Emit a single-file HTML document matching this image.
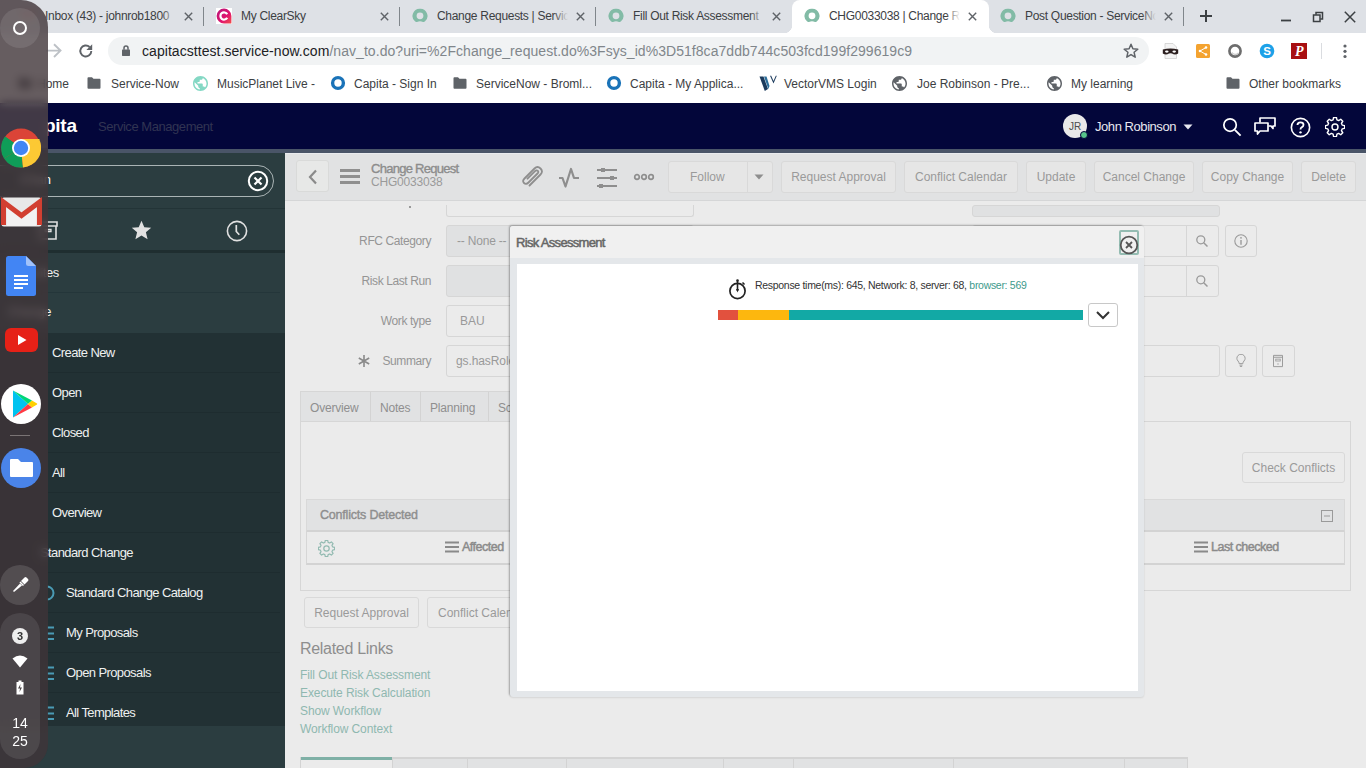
<!DOCTYPE html>
<html><head><meta charset="utf-8">
<style>
*{box-sizing:border-box;margin:0;padding:0}
html,body{width:1366px;height:768px;overflow:hidden;background:#fff;font-family:"Liberation Sans",sans-serif}
.a{position:absolute}
.nw{white-space:nowrap}
/* chrome */
#tabs{left:0;top:0;width:1366px;height:33px;background:#dee1e6}
.tab{position:absolute;top:0;height:32px;width:196px;font-size:12px;color:#3c4043}
.tab .fav{position:absolute;left:11px;top:8px;width:16px;height:16px}
.tab .tt{position:absolute;left:36px;top:9px;width:131px;overflow:hidden;white-space:nowrap;letter-spacing:-0.3px}
.tab .tt:after{content:"";position:absolute;right:0;top:0;width:14px;height:16px;background:linear-gradient(90deg,rgba(222,225,230,0),#dee1e6)}
.tab.act .tt:after{background:linear-gradient(90deg,rgba(255,255,255,0),#fff)}
.tab .cx{position:absolute;left:175px;top:12px;width:9px;height:9px}
.sep{position:absolute;top:7px;width:1px;height:19px;background:#80868b}
#toolbar{left:0;top:33px;width:1366px;height:70px;background:#fff}
#omni{left:108px;top:37px;width:1041px;height:28px;border-radius:14px;background:#f1f3f4}
.bm{position:absolute;top:77px;font-size:12px;color:#3c4043;white-space:nowrap;letter-spacing:0px}
/* sn header */
#snh{left:0;top:103px;width:1366px;height:46px;background:#03063a}
#slate{left:0;top:149px;width:1366px;height:4px;background:#4a5568}
#nav{left:0;top:153px;width:285px;height:615px;background:#2b3d40}
#content{left:285px;top:153px;width:1081px;height:615px;background:#ebebeb;overflow:hidden}
.lbl{position:absolute;font-size:12px;color:#959595;white-space:nowrap;text-align:right;letter-spacing:-0.4px}
.fld{position:absolute;height:32px;border:1px solid #d6d6d6;border-radius:3px;background:#ebebeb}
.ro{background:#e0e1e2}
.btn{position:absolute;height:31px;border:1px solid #d9d9d9;border-radius:3px;background:#e6e6e6;font-size:12px;color:#9a9a9a;text-align:center;line-height:29px;white-space:nowrap}
</style></head><body>

<!-- Chrome tabs -->
<div id="tabs" class="a"></div>
<div class="a" style="left:792px;top:0;width:197px;height:33px;background:#fff;border-radius:8px 8px 0 0"></div>
<div class="a" style="left:784px;top:25px;width:8px;height:8px;background:radial-gradient(circle at 0 0,#dee1e6 8px,#fff 8.5px)"></div>
<div class="a" style="left:989px;top:25px;width:8px;height:8px;background:radial-gradient(circle at 100% 0,#dee1e6 8px,#fff 8.5px)"></div>
<div class="tab" style="left:9px"><svg class="fav" viewBox="0 0 16 16"><rect x="1" y="3" width="14" height="10" fill="#fff"/><path d="M1 3L8 9L15 3" stroke="#d44638" stroke-width="2" fill="none"/></svg><div class="tt">Inbox (43) - johnrob1800</div><svg class="cx" viewBox="0 0 9 9"><path d="M0.8 0.8L8.2 8.2M8.2 0.8L0.8 8.2" stroke="#5f6368" stroke-width="1.4"/></svg></div>
<div class="tab" style="left:205px"><svg class="fav" viewBox="0 0 16 16"><defs><linearGradient id="csg" x1="0" y1="0" x2="1" y2="1"><stop offset="0" stop-color="#b5157a"/><stop offset="0.6" stop-color="#e0146e"/><stop offset="1" stop-color="#f2504a"/></linearGradient></defs><rect width="16" height="16" fill="#fff"/><path d="M15.4 8A7.4 7.4 0 1 0 8 15.4H15.4Z" fill="url(#csg)"/><path d="M11.2 6.3A3.6 3.6 0 1 0 11.2 9.7" fill="none" stroke="#fff" stroke-width="2.2"/></svg><div class="tt">My ClearSky</div><svg class="cx" viewBox="0 0 9 9"><path d="M0.8 0.8L8.2 8.2M8.2 0.8L0.8 8.2" stroke="#5f6368" stroke-width="1.4"/></svg></div>
<div class="tab" style="left:401px"><svg class="fav" viewBox="0 0 16 16"><path d="M8 0.8A7.2 7.2 0 0 0 3.2 13.6Q4 14.3 5 13.9Q8 12.8 11 13.9Q12 14.3 12.8 13.6A7.2 7.2 0 0 0 8 0.8ZM8 4.4A3.4 3.4 0 1 1 8 11.2A3.4 3.4 0 1 1 8 4.4Z" fill="#82bba6" fill-rule="evenodd"/></svg><div class="tt">Change Requests | ServiceNow</div><svg class="cx" viewBox="0 0 9 9"><path d="M0.8 0.8L8.2 8.2M8.2 0.8L0.8 8.2" stroke="#5f6368" stroke-width="1.4"/></svg></div>
<div class="tab" style="left:597px"><svg class="fav" viewBox="0 0 16 16"><path d="M8 0.8A7.2 7.2 0 0 0 3.2 13.6Q4 14.3 5 13.9Q8 12.8 11 13.9Q12 14.3 12.8 13.6A7.2 7.2 0 0 0 8 0.8ZM8 4.4A3.4 3.4 0 1 1 8 11.2A3.4 3.4 0 1 1 8 4.4Z" fill="#82bba6" fill-rule="evenodd"/></svg><div class="tt">Fill Out Risk Assessment</div><svg class="cx" viewBox="0 0 9 9"><path d="M0.8 0.8L8.2 8.2M8.2 0.8L0.8 8.2" stroke="#5f6368" stroke-width="1.4"/></svg></div>
<div class="tab act" style="left:793px"><svg class="fav" viewBox="0 0 16 16"><path d="M8 0.8A7.2 7.2 0 0 0 3.2 13.6Q4 14.3 5 13.9Q8 12.8 11 13.9Q12 14.3 12.8 13.6A7.2 7.2 0 0 0 8 0.8ZM8 4.4A3.4 3.4 0 1 1 8 11.2A3.4 3.4 0 1 1 8 4.4Z" fill="#82bba6" fill-rule="evenodd"/></svg><div class="tt">CHG0033038 | Change Request</div><svg class="cx" viewBox="0 0 9 9"><path d="M0.8 0.8L8.2 8.2M8.2 0.8L0.8 8.2" stroke="#5f6368" stroke-width="1.4"/></svg></div>
<div class="tab" style="left:989px"><svg class="fav" viewBox="0 0 16 16"><path d="M8 0.8A7.2 7.2 0 0 0 3.2 13.6Q4 14.3 5 13.9Q8 12.8 11 13.9Q12 14.3 12.8 13.6A7.2 7.2 0 0 0 8 0.8ZM8 4.4A3.4 3.4 0 1 1 8 11.2A3.4 3.4 0 1 1 8 4.4Z" fill="#82bba6" fill-rule="evenodd"/></svg><div class="tt">Post Question - ServiceNow</div><svg class="cx" viewBox="0 0 9 9"><path d="M0.8 0.8L8.2 8.2M8.2 0.8L0.8 8.2" stroke="#5f6368" stroke-width="1.4"/></svg></div>
<div class="sep" style="left:203px"></div>
<div class="sep" style="left:399px"></div>
<div class="sep" style="left:595px"></div>
<div class="sep" style="left:1183px"></div>
<svg class="a" style="left:1199px;top:9px" width="14" height="14" viewBox="0 0 14 14"><path d="M7 1V13M1 7H13" stroke="#3c4043" stroke-width="2"/></svg>
<svg class="a" style="left:1279px;top:12px" width="14" height="14" viewBox="0 0 14 14"><path d="M2 8.5H12" stroke="#3c4043" stroke-width="1.8"/></svg>
<svg class="a" style="left:1312px;top:11px" width="12" height="12" viewBox="0 0 12 12"><rect x="1.5" y="4" width="6.5" height="6.5" fill="none" stroke="#3c4043" stroke-width="1.5"/><path d="M4 3.8V1.5H10.5V8H8.2" fill="none" stroke="#3c4043" stroke-width="1.5"/></svg>
<svg class="a" style="left:1343px;top:10px" width="14" height="14" viewBox="0 0 14 14"><path d="M1.8 1.8L12.2 12.2M12.2 1.8L1.8 12.2" stroke="#3c4043" stroke-width="1.5"/></svg>

<div id="toolbar" class="a"></div>
<div id="omni" class="a"></div>
<div class="a nw" style="left:142px;top:43px;font-size:14px;color:#202124;letter-spacing:0.05px">capitacsttest.service-now.com<span style="color:#80868b">/nav_to.do?uri=%2Fchange_request.do%3Fsys_id%3D51f8ca7ddb744c503fcd199f299619c9</span></div>

<!-- toolbar icons -->
<svg class="a" style="left:40px;top:42px" width="24" height="18" viewBox="0 0 24 18"><path d="M6 8.6H20.5M14 2.3L20.5 8.6L14 15" fill="none" stroke="#bdc1c6" stroke-width="1.9"/></svg>
<svg class="a" style="left:77px;top:42px" width="18" height="18" viewBox="0 0 18 18"><path d="M14.3 9A5.5 5.5 0 1 1 12.6 5" fill="none" stroke="#5f6368" stroke-width="1.9"/><path d="M15.2 2.3V8.1H9.4Z" fill="#5f6368"/></svg>
<svg class="a" style="left:120px;top:44px" width="12" height="13" viewBox="0 0 12 13"><path d="M4 5.8V3.9A2 2 0 0 1 8 3.9V5.8" fill="none" stroke="#5f6368" stroke-width="1.5"/><rect x="2" y="5.6" width="8" height="6.3" rx="0.6" fill="#5f6368"/></svg>
<svg class="a" style="left:1122px;top:42px" width="18" height="18" viewBox="0 0 18 18"><path d="M9 2.2L10.9 6.8L15.8 7.2L12.1 10.3L13.2 15.2L9 12.6L4.8 15.2L5.9 10.3L2.2 7.2L7.1 6.8Z" fill="none" stroke="#5f6368" stroke-width="1.5" stroke-linejoin="round"/></svg>
<svg class="a" style="left:1162px;top:43px" width="17" height="16" viewBox="0 0 17 16"><path d="M3 0.5H11L14.5 4V15.5H3Z" fill="#f4f4f4" stroke="#cfcfcf" stroke-width="0.8"/><path d="M0.8 6.5Q8.5 4.5 16.2 6.5V10.5Q13 12.5 10 10.5Q8.5 9.8 7 10.5Q4 12.5 0.8 10.5Z" fill="#2b1f1f"/><ellipse cx="4.8" cy="8.6" rx="1.8" ry="1.1" fill="#fff"/><ellipse cx="12.2" cy="8.6" rx="1.8" ry="1.1" fill="#fff"/></svg>
<svg class="a" style="left:1196px;top:44px" width="14" height="14" viewBox="0 0 14 14"><rect width="14" height="14" rx="1.5" fill="#f4a330"/><path d="M10 3.5L4 7L10 10.5" fill="none" stroke="#fff" stroke-width="1"/><circle cx="10" cy="3.5" r="1.3" fill="#fff"/><circle cx="4" cy="7" r="1.3" fill="#fff"/><circle cx="10" cy="10.5" r="1.3" fill="#fff"/></svg>
<svg class="a" style="left:1227px;top:43px" width="16" height="16" viewBox="0 0 16 16"><circle cx="8" cy="8" r="5.6" fill="#fff" stroke="#6d6d6d" stroke-width="2.6"/><path d="M5 9.5A4 4 0 0 0 11.5 10" fill="none" stroke="#c9c9c9" stroke-width="1.4"/></svg>
<svg class="a" style="left:1259px;top:43px" width="16" height="16" viewBox="0 0 16 16"><circle cx="8" cy="8" r="7.3" fill="#1da1e8"/><text x="8" y="12.2" font-family="Liberation Sans" font-size="11.5" font-weight="700" fill="#fff" text-anchor="middle">S</text></svg>
<svg class="a" style="left:1291px;top:43px" width="16" height="16" viewBox="0 0 16 16"><rect width="16" height="16" fill="#a80f12"/><text x="8.3" y="13" font-family="Liberation Serif" font-size="14" font-style="italic" font-weight="700" fill="#fff" text-anchor="middle">P</text></svg>
<div class="a" style="left:1321px;top:43px;width:1px;height:16px;background:#dadce0"></div>
<svg class="a" style="left:1341px;top:43px" width="8" height="16" viewBox="0 0 8 16"><circle cx="4" cy="3" r="1.6" fill="#5f6368"/><circle cx="4" cy="8.3" r="1.6" fill="#5f6368"/><circle cx="4" cy="13.5" r="1.6" fill="#5f6368"/></svg>
<!-- bookmarks -->
<svg class="a" style="left:18px;top:77px" width="14" height="12" viewBox="0 0 14 12"><path d="M0.5 1.2Q0.5 0.3 1.4 0.3H5L6.5 1.8H12.6Q13.5 1.8 13.5 2.7V10.8Q13.5 11.7 12.6 11.7H1.4Q0.5 11.7 0.5 10.8Z" fill="#5f6368"/></svg>
<div class="bm" style="left:37px">Home</div>
<svg class="a" style="left:87px;top:77px" width="14" height="12" viewBox="0 0 14 12"><path d="M0.5 1.2Q0.5 0.3 1.4 0.3H5L6.5 1.8H12.6Q13.5 1.8 13.5 2.7V10.8Q13.5 11.7 12.6 11.7H1.4Q0.5 11.7 0.5 10.8Z" fill="#5f6368"/></svg>
<div class="bm" style="left:111px">Service-Now</div>
<svg class="a" style="left:193px;top:76px" width="15" height="15" viewBox="2 2 20 20"><path d="M12 2C6.48 2 2 6.48 2 12s4.48 10 10 10 10-4.48 10-10S17.52 2 12 2zm-1 17.93c-3.950-.49-7-3.85-7-7.93 0-.62.08-1.21.21-1.79L9 15v1c0 1.1.9 2 2 2v1.93zm6.9-2.540c-.26-.81-1-1.39-1.9-1.39h-1v-3c0-.55-.45-1-1-1H8v-2h2c.55 0 1-.45 1-1V7h2c1.1 0 2-.9 2-2v-.41c2.93 1.19 5 4.06 5 7.41 0 2.08-.8 3.97-2.1 5.39z" fill="#84d8c4"/></svg>
<div class="bm" style="left:217px">MusicPlanet Live -</div>
<svg class="a" style="left:330px;top:75px" width="16" height="16" viewBox="0 0 16 16"><circle cx="8" cy="8" r="5.4" fill="none" stroke="#1a73b8" stroke-width="3.4"/></svg>
<div class="bm" style="left:354px">Capita - Sign In</div>
<svg class="a" style="left:453px;top:77px" width="14" height="12" viewBox="0 0 14 12"><path d="M0.5 1.2Q0.5 0.3 1.4 0.3H5L6.5 1.8H12.6Q13.5 1.8 13.5 2.7V10.8Q13.5 11.7 12.6 11.7H1.4Q0.5 11.7 0.5 10.8Z" fill="#5f6368"/></svg>
<div class="bm" style="left:476px">ServiceNow - Broml...</div>
<svg class="a" style="left:606px;top:75px" width="16" height="16" viewBox="0 0 16 16"><circle cx="8" cy="8" r="5.4" fill="none" stroke="#1a73b8" stroke-width="3.4"/></svg>
<div class="bm" style="left:630px">Capita - My Applica...</div>
<svg class="a" style="left:759px;top:75px" width="18" height="17" viewBox="0 0 18 17"><path d="M0.5 1.5H4.5L9 14L5.8 16Z" fill="#1b3a5c"/><path d="M5 1.5H7.5L10.5 11L9.3 14Z" fill="#2c6e9a"/><path d="M11 0.8L12.2 0.8L14.5 6L16.8 0.8H17.8L14.5 8.5Z" fill="#1b3a5c"/></svg>
<div class="bm" style="left:784px">VectorVMS Login</div>
<svg class="a" style="left:892px;top:76px" width="15" height="15" viewBox="2 2 20 20"><path d="M12 2C6.48 2 2 6.48 2 12s4.48 10 10 10 10-4.48 10-10S17.52 2 12 2zm-1 17.93c-3.950-.49-7-3.85-7-7.93 0-.62.08-1.21.21-1.79L9 15v1c0 1.1.9 2 2 2v1.93zm6.9-2.540c-.26-.81-1-1.39-1.9-1.39h-1v-3c0-.55-.45-1-1-1H8v-2h2c.55 0 1-.45 1-1V7h2c1.1 0 2-.9 2-2v-.41c2.93 1.19 5 4.06 5 7.41 0 2.08-.8 3.97-2.1 5.39z" fill="#5f6368"/></svg>
<div class="bm" style="left:917px">Joe Robinson - Pre...</div>
<svg class="a" style="left:1047px;top:76px" width="15" height="15" viewBox="2 2 20 20"><path d="M12 2C6.48 2 2 6.48 2 12s4.48 10 10 10 10-4.48 10-10S17.52 2 12 2zm-1 17.93c-3.950-.49-7-3.85-7-7.93 0-.62.08-1.21.21-1.79L9 15v1c0 1.1.9 2 2 2v1.93zm6.9-2.540c-.26-.81-1-1.39-1.9-1.39h-1v-3c0-.55-.45-1-1-1H8v-2h2c.55 0 1-.45 1-1V7h2c1.1 0 2-.9 2-2v-.41c2.93 1.19 5 4.06 5 7.41 0 2.08-.8 3.97-2.1 5.39z" fill="#5f6368"/></svg>
<div class="bm" style="left:1071px">My learning</div>
<svg class="a" style="left:1226px;top:77px" width="14" height="12" viewBox="0 0 14 12"><path d="M0.5 1.2Q0.5 0.3 1.4 0.3H5L6.5 1.8H12.6Q13.5 1.8 13.5 2.7V10.8Q13.5 11.7 12.6 11.7H1.4Q0.5 11.7 0.5 10.8Z" fill="#5f6368"/></svg>
<div class="bm" style="left:1249px">Other bookmarks</div>
<div id="snh" class="a"></div>
<div id="slate" class="a"></div>
<div id="nav" class="a"></div>
<div id="content" class="a"></div>
<!-- content -->
<div class="a" style="left:285px;top:153px;width:1081px;height:48px;background:#e1e2e3;border-bottom:1px solid #d5d6d7"></div>
<div class="a" style="left:285px;top:153px;width:1081px;height:1px;background:#e9ebee"></div>
<div class="a" style="left:296px;top:160px;width:33px;height:32px;background:#e7e8e7;border:1px solid #d9dad9;border-radius:3px"></div>
<svg class="a" style="left:306px;top:168px" width="14" height="18" viewBox="0 0 14 18"><path d="M10 2.5L4 9L10 15.5" fill="none" stroke="#8a8a8a" stroke-width="2.2"/></svg>
<div class="a" style="left:340px;top:169px;width:20px;height:3px;background:#8f8f8f"></div>
<div class="a" style="left:340px;top:175px;width:20px;height:3px;background:#8f8f8f"></div>
<div class="a" style="left:340px;top:181px;width:20px;height:3px;background:#8f8f8f"></div>
<div class="a nw" style="left:371px;top:161px;font-size:13px;color:#8c8c8c;letter-spacing:-0.72px;-webkit-text-stroke:0.35px #8c8c8c">Change Request</div>
<div class="a nw" style="left:371px;top:175px;font-size:12px;color:#9a9a9a;letter-spacing:-0.2px">CHG0033038</div>
<svg class="a" style="left:521px;top:165px" width="24" height="24" viewBox="0 0 24 24"><path d="M8.5 20.5L19.5 9.5Q22.5 6.5 19.5 3.5Q16.5 0.5 13.5 3.5L3.5 13.5Q1 16 3 18Q5 20 7.5 17.5L16.5 8.5Q18 7 16.8 5.8Q15.6 4.6 14 6.2L6.5 13.7" fill="none" stroke="#8e8e8e" stroke-width="1.8" stroke-linecap="round"/></svg>
<svg class="a" style="left:558px;top:167px" width="24" height="21" viewBox="0 0 24 21"><path d="M1 11H4.5L7.5 19.5L13 2L16 11H21" fill="none" stroke="#8e8e8e" stroke-width="2.2" stroke-linejoin="round"/></svg>
<svg class="a" style="left:596px;top:167px" width="22" height="22" viewBox="0 0 22 22"><path d="M1 3H21M1 11H21M1 19H21" stroke="#8e8e8e" stroke-width="1.8"/><rect x="5" y="1" width="4" height="4" fill="#8e8e8e"/><rect x="14" y="9" width="4" height="4" fill="#8e8e8e"/><rect x="3" y="17" width="4" height="4" fill="#8e8e8e"/></svg>
<svg class="a" style="left:633px;top:172px" width="22" height="10" viewBox="0 0 22 10"><circle cx="4" cy="5" r="2.3" fill="none" stroke="#8e8e8e" stroke-width="1.7"/><circle cx="11" cy="5" r="2.3" fill="none" stroke="#8e8e8e" stroke-width="1.7"/><circle cx="18" cy="5" r="2.3" fill="none" stroke="#8e8e8e" stroke-width="1.7"/></svg>
<div class="btn" style="left:668px;top:161px;width:105px;height:32px;line-height:31px;text-align:left;padding-left:21px;">Follow</div>
<div class="a" style="left:747px;top:162px;width:1px;height:30px;background:#d9d9d9"></div>
<svg class="a" style="left:754px;top:174px" width="10" height="6" viewBox="0 0 10 6"><path d="M0.5 0.5H9.5L5 5.5Z" fill="#8e8e8e"/></svg>
<div class="btn" style="left:781px;top:161px;width:115px;height:32px;line-height:31px">Request Approval</div>
<div class="btn" style="left:904px;top:161px;width:114px;height:32px;line-height:31px">Conflict Calendar</div>
<div class="btn" style="left:1026px;top:161px;width:60px;height:32px;line-height:31px">Update</div>
<div class="btn" style="left:1094px;top:161px;width:100px;height:32px;line-height:31px">Cancel Change</div>
<div class="btn" style="left:1202px;top:161px;width:91px;height:32px;line-height:31px">Copy Change</div>
<div class="btn" style="left:1301px;top:161px;width:55px;height:32px;line-height:31px">Delete</div>
<!-- form -->
<div class="fld" style="left:446px;top:205px;width:248px;height:12px;border-top:none;border-radius:0 0 3px 3px"></div>
<div class="fld ro" style="left:972px;top:205px;width:248px;height:12px;"></div>
<div class="a" style="left:409px;top:206px;width:2px;height:2px;background:#999"></div>
<div class="lbl" style="left:331px;top:234px;width:100px">RFC Category</div>
<div class="fld ro" style="left:446px;top:225px;width:248px"></div>
<div class="a nw" style="left:457px;top:234px;font-size:12px;color:#999;letter-spacing:-0.2px">-- None --</div>
<div class="lbl" style="left:331px;top:274px;width:100px">Risk Last Run</div>
<div class="fld ro" style="left:446px;top:265px;width:248px"></div>
<div class="lbl" style="left:331px;top:314px;width:100px">Work type</div>
<div class="fld" style="left:446px;top:305px;width:248px"></div>
<div class="a nw" style="left:460px;top:314px;font-size:12px;color:#999">BAU</div>
<div class="lbl" style="left:331px;top:354px;width:100px">Summary</div>
<svg class="a" style="left:357px;top:354px" width="14" height="14" viewBox="0 0 14 14"><path d="M7 1V13M1.8 4L12.2 10M12.2 4L1.8 10" stroke="#8a8a8a" stroke-width="1.6"/></svg>
<div class="fld" style="left:446px;top:345px;width:774px"></div>
<div class="a nw" style="left:456px;top:354px;font-size:12px;color:#999;letter-spacing:-0.1px">gs.hasRole</div>
<div class="fld" style="left:972px;top:225px;width:247px"></div>
<div class="a" style="left:1186px;top:225px;width:1px;height:32px;background:#d6d6d6"></div>
<svg class="a" style="left:1195px;top:234px" width="14" height="14" viewBox="0 0 14 14"><circle cx="5.8" cy="5.8" r="4" fill="none" stroke="#9a9a9a" stroke-width="1.3"/><path d="M8.7 8.7L12.5 12.5" stroke="#9a9a9a" stroke-width="1.5"/></svg>
<div class="fld" style="left:1225px;top:225px;width:32px"></div>
<svg class="a" style="left:1234px;top:234px" width="14" height="14" viewBox="0 0 14 14"><circle cx="7" cy="7" r="6.2" fill="none" stroke="#9a9a9a" stroke-width="1.1"/><path d="M7 6V10.8" stroke="#9a9a9a" stroke-width="1.4"/><circle cx="7" cy="3.8" r="0.9" fill="#9a9a9a"/></svg>
<div class="fld" style="left:972px;top:265px;width:247px"></div>
<div class="a" style="left:1186px;top:265px;width:1px;height:32px;background:#d6d6d6"></div>
<svg class="a" style="left:1195px;top:274px" width="14" height="14" viewBox="0 0 14 14"><circle cx="5.8" cy="5.8" r="4" fill="none" stroke="#9a9a9a" stroke-width="1.3"/><path d="M8.7 8.7L12.5 12.5" stroke="#9a9a9a" stroke-width="1.5"/></svg>
<div class="fld" style="left:1225px;top:345px;width:32px"></div>
<svg class="a" style="left:1235px;top:354px" width="12" height="14" viewBox="0 0 16 18"><path d="M5.5 12.5Q5.5 10.5 4 9Q2.5 7.3 2.5 5.5A5.5 5.5 0 0 1 13.5 5.5Q13.5 7.3 12 9Q10.5 10.5 10.5 12.5Z" fill="none" stroke="#999" stroke-width="1.3"/><path d="M6 14.5H10M6.5 16.3H9.5" stroke="#999" stroke-width="1.2"/></svg>
<div class="fld" style="left:1262px;top:345px;width:33px"></div>
<svg class="a" style="left:1272px;top:354px" width="12" height="14" viewBox="0 0 16 18"><path d="M2 1.5H14M2 1.5V16.5H14V1.5M2 4H14" fill="none" stroke="#999" stroke-width="1.3"/><rect x="5" y="6.5" width="6" height="2.5" fill="none" stroke="#999" stroke-width="1.1"/><path d="M7 13H9" stroke="#999" stroke-width="1.2"/></svg>
<!-- tabs panel -->
<div class="a" style="left:300px;top:421px;width:1051px;height:170px;border:1px solid #d6d6d6"></div>
<div class="a" style="left:300px;top:391px;width:300px;height:31px;background:#e1e2e3;border:1px solid #d6d6d6"></div>
<div class="a nw" style="left:310px;top:401px;font-size:12px;color:#8f8f8f;letter-spacing:-0.2px">Overview</div>
<div class="a" style="left:370px;top:392px;width:1px;height:29px;background:#d3d3d3"></div>
<div class="a nw" style="left:380px;top:401px;font-size:12px;color:#8f8f8f;letter-spacing:-0.2px">Notes</div>
<div class="a" style="left:420px;top:392px;width:1px;height:29px;background:#d3d3d3"></div>
<div class="a nw" style="left:430px;top:401px;font-size:12px;color:#8f8f8f;letter-spacing:-0.2px">Planning</div>
<div class="a" style="left:488px;top:392px;width:1px;height:29px;background:#d3d3d3"></div>
<div class="a nw" style="left:498px;top:401px;font-size:12px;color:#8f8f8f;letter-spacing:-0.2px">Schedule</div>
<div class="btn" style="left:1242px;top:452px;width:103px;background:#ebebeb;line-height:31px">Check Conflicts</div>
<div class="a" style="left:306px;top:499px;width:1039px;height:66px;border:1px solid #d6d6d6;border-bottom:2px solid #d3d3d3"></div>
<div class="a" style="left:306px;top:499px;width:1039px;height:33px;background:#e1e2e3;border:1px solid #d9d9d9;border-bottom:2px solid #d3d3d3"></div>
<div class="a nw" style="left:320px;top:508px;font-size:12.5px;color:#8e8e8e;letter-spacing:-0.2px;-webkit-text-stroke:0.4px #8e8e8e">Conflicts Detected</div>
<svg class="a" style="left:1321px;top:510px" width="12" height="12" viewBox="0 0 12 12"><rect x="0.5" y="0.5" width="11" height="11" fill="none" stroke="#9a9a9a" stroke-width="1"/><path d="M3 6H9" stroke="#9a9a9a" stroke-width="1"/></svg>
<svg class="a" style="left:318px;top:540px" width="17" height="17" viewBox="0 0 24 24"><path d="M10.3 1.5H13.7L14.3 4.4L16.4 5.3L18.9 3.7L21.3 6.1L19.7 8.6L20.6 10.7L23.5 11.3V14.7L20.6 15.3L19.7 17.4L21.3 19.9L18.9 22.3L16.4 20.7L14.3 21.6L13.7 24.5H10.3L9.7 21.6L7.6 20.7L5.1 22.3L2.7 19.9L4.3 17.4L3.4 15.3L0.5 14.7V11.3L3.4 10.7L4.3 8.6L2.7 6.1L5.1 3.7L7.6 5.3L9.7 4.4Z" transform="translate(0,-1)" fill="none" stroke="#92bab1" stroke-width="1.7" stroke-linejoin="round"/><circle cx="12" cy="12" r="3.8" fill="none" stroke="#92bab1" stroke-width="1.7"/></svg>
<svg class="a" style="left:445px;top:541px" width="14" height="12" viewBox="0 0 14 12"><path d="M0 1.5H14M0 6H14M0 10.5H14" stroke="#8a8a8a" stroke-width="2"/></svg>
<div class="a nw" style="left:462px;top:540px;font-size:12.5px;color:#8a8a8a;letter-spacing:-0.5px;-webkit-text-stroke:0.45px #8a8a8a">Affected</div>
<svg class="a" style="left:1194px;top:541px" width="14" height="12" viewBox="0 0 14 12"><path d="M0 1.5H14M0 6H14M0 10.5H14" stroke="#8a8a8a" stroke-width="2"/></svg>
<div class="a nw" style="left:1211px;top:540px;font-size:12.5px;color:#8a8a8a;letter-spacing:-0.5px;-webkit-text-stroke:0.45px #8a8a8a">Last checked</div>
<!-- bottom -->
<div class="btn" style="left:304px;top:597px;width:115px;background:#ebebeb;line-height:31px">Request Approval</div>
<div class="btn" style="left:427px;top:597px;width:114px;background:#ebebeb;line-height:31px">Conflict Calendar</div>
<div class="a nw" style="left:300px;top:640px;font-size:16px;color:#8e8e8e;letter-spacing:-0.3px">Related Links</div>
<div class="a nw" style="left:300px;top:666px;font-size:12px;color:#8fb8b0;line-height:18px;letter-spacing:-0.1px">Fill Out Risk Assessment<br>Execute Risk Calculation<br>Show Workflow<br>Workflow Context</div>
<div class="a" style="left:300px;top:757px;width:888px;height:11px;background:#e1e2e3;border:1px solid #d3d3d3;border-top:2px solid #d3d3d3;border-bottom:none"></div>
<div class="a" style="left:301px;top:757px;width:91px;height:11px;background:#ebebeb;border-top:3px solid #7fb0a6"></div>
<div class="a" style="left:392px;top:758px;width:1px;height:10px;background:#d3d3d3"></div>
<div class="a" style="left:467px;top:758px;width:1px;height:10px;background:#d3d3d3"></div>
<div class="a" style="left:566px;top:758px;width:1px;height:10px;background:#d3d3d3"></div>
<div class="a" style="left:723px;top:758px;width:1px;height:10px;background:#d3d3d3"></div>
<div class="a" style="left:793px;top:758px;width:1px;height:10px;background:#d3d3d3"></div>
<div class="a" style="left:953px;top:758px;width:1px;height:10px;background:#d3d3d3"></div>
<div class="a" style="left:1124px;top:758px;width:1px;height:10px;background:#d3d3d3"></div>
<!-- modal -->
<div class="a" style="left:510px;top:226px;width:634px;height:471px;background:#e4e7ea;border-radius:3px;box-shadow:-1px -1px 2px rgba(0,0,0,0.3),0 1px 2px rgba(0,0,0,0.08)"></div>
<div class="a" style="left:510px;top:226px;width:634px;height:32px;background:#f0f0f0;border-radius:3px 3px 0 0"></div>
<div class="a nw" style="left:516px;top:235px;font-size:13px;color:#666;letter-spacing:-0.68px;-webkit-text-stroke:0.5px #666">Risk Assessment</div>
<div class="a" style="left:1119px;top:230px;width:20px;height:25px;border:2px solid #94bcb2;border-radius:2px"></div>
<svg class="a" style="left:1119px;top:235px" width="20" height="20" viewBox="0 0 20 20"><circle cx="10" cy="10" r="8.3" fill="#f0f0f0" stroke="#555" stroke-width="1.8"/><path d="M7 7L13 13M13 7L7 13" stroke="#555" stroke-width="1.8"/></svg>
<div class="a" style="left:517px;top:264px;width:621px;height:427px;background:#fff"></div>
<svg class="a" style="left:727px;top:278px" width="22" height="22" viewBox="0 0 22 22"><circle cx="10.5" cy="13" r="7.6" fill="none" stroke="#222" stroke-width="1.7"/><path d="M10.5 3V13" stroke="#222" stroke-width="1.6"/><path d="M9 11L10.5 14.5L12 11Z" fill="#222"/><circle cx="10.5" cy="2.6" r="1.3" fill="#222"/><path d="M15.5 4.5L17.5 6.5" stroke="#222" stroke-width="1.6"/></svg>
<div class="a nw" style="left:755px;top:279px;font-size:10.5px;color:#333;letter-spacing:-0.3px">Response time(ms): 645, Network: 8, server: 68, <span style="color:#3d9a8c">browser: 569</span></div>
<div class="a" style="left:718px;top:310px;width:20px;height:10px;background:#e2513e"></div>
<div class="a" style="left:738px;top:310px;width:51px;height:10px;background:#fdb70e"></div>
<div class="a" style="left:789px;top:310px;width:294px;height:10px;background:#12a9a5"></div>
<div class="a" style="left:1088px;top:303px;width:30px;height:24px;border:1px solid #c8c8c8;border-radius:3px;background:#fff"></div>
<svg class="a" style="left:1095px;top:309px" width="16" height="12" viewBox="0 0 16 12"><path d="M2 3L8 9L14 3" fill="none" stroke="#333" stroke-width="2"/></svg>
<!-- nav -->
<div class="a" style="left:-20px;top:165px;width:294px;height:32px;border:1px solid #aab4b5;border-radius:16px"></div>
<div class="a nw" style="left:20px;top:172px;font-size:13px;color:#fff">Chan</div>
<svg class="a" style="left:247px;top:170px" width="22" height="22" viewBox="0 0 22 22"><circle cx="11" cy="11" r="9.2" fill="none" stroke="#fff" stroke-width="2"/><path d="M7.5 7.5L14.5 14.5M14.5 7.5L7.5 14.5" stroke="#fff" stroke-width="2.2"/></svg>
<div class="a" style="left:0;top:208px;width:285px;height:1px;background:#233437"></div>
<svg class="a" style="left:37px;top:221px" width="22" height="19" viewBox="0 0 22 19"><path d="M1 1H20V5H1ZM2.5 5V18H19V5" fill="none" stroke="#e0e0e0" stroke-width="1.6"/><path d="M8 8.5H14V10.5H8Z" fill="none" stroke="#e0e0e0" stroke-width="1.3"/></svg>
<svg class="a" style="left:131px;top:220px" width="21" height="21" viewBox="0 0 21 21"><path d="M10.5 0.8L13.3 7.3L20.2 7.8L14.9 12.3L16.6 19.2L10.5 15.5L4.4 19.2L6.1 12.3L0.8 7.8L7.7 7.3Z" fill="#e1e1e1"/></svg>
<svg class="a" style="left:226px;top:220px" width="22" height="22" viewBox="0 0 22 22"><circle cx="11" cy="11" r="9.6" fill="none" stroke="#e1e1e1" stroke-width="1.6"/><path d="M10.3 5V11.5L13.3 14.8" fill="none" stroke="#e1e1e1" stroke-width="1.7"/></svg>
<div class="a" style="left:0;top:250px;width:285px;height:3px;background:#1f2e30"></div>
<div class="a nw" style="left:9px;top:265px;font-size:13px;color:#f0f0f0;letter-spacing:-0.4px">Favorites</div>
<div class="a" style="left:0;top:292px;width:280px;height:1px;background:#24363a"></div>
<div class="a nw" style="left:8px;top:304px;font-size:13px;color:#f0f0f0;letter-spacing:-0.4px">Change</div>
<div class="a" style="left:0;top:333px;width:285px;height:393px;background:#223134"></div>
<div class="a nw" style="left:52px;top:345px;font-size:13px;color:#eef0f0;letter-spacing:-0.6px">Create New</div>
<div class="a" style="left:0;top:372px;width:280px;height:1px;background:#1e2c2f"></div>
<div class="a nw" style="left:52px;top:385px;font-size:13px;color:#eef0f0;letter-spacing:-0.6px">Open</div>
<div class="a" style="left:0;top:412px;width:280px;height:1px;background:#1e2c2f"></div>
<div class="a nw" style="left:52px;top:425px;font-size:13px;color:#eef0f0;letter-spacing:-0.6px">Closed</div>
<div class="a" style="left:0;top:452px;width:280px;height:1px;background:#1e2c2f"></div>
<div class="a nw" style="left:52px;top:465px;font-size:13px;color:#eef0f0;letter-spacing:-0.6px">All</div>
<div class="a" style="left:0;top:492px;width:280px;height:1px;background:#1e2c2f"></div>
<div class="a nw" style="left:52px;top:505px;font-size:13px;color:#eef0f0;letter-spacing:-0.6px">Overview</div>
<div class="a" style="left:0;top:532px;width:280px;height:1px;background:#1e2c2f"></div>
<div class="a nw" style="left:40px;top:545px;font-size:13px;color:#eef0f0;letter-spacing:-0.6px">Standard Change</div>
<div class="a" style="left:0;top:572px;width:280px;height:1px;background:#1e2c2f"></div>
<div class="a nw" style="left:66px;top:585px;font-size:13px;color:#eef0f0;letter-spacing:-0.6px">Standard Change Catalog</div>
<svg class="a" style="left:38px;top:585px" width="18" height="16" viewBox="0 0 18 16"><path d="M9 1.5A6.5 6.5 0 0 1 9 14.5" fill="none" stroke="#4a9bb5" stroke-width="2"/></svg>
<div class="a" style="left:0;top:612px;width:280px;height:1px;background:#1e2c2f"></div>
<div class="a nw" style="left:66px;top:625px;font-size:13px;color:#eef0f0;letter-spacing:-0.6px">My Proposals</div>
<svg class="a" style="left:46px;top:626px" width="9" height="14" viewBox="0 0 9 14"><path d="M1 1.5H8M1 7.5H8M1 13H8" stroke="#4a9bb5" stroke-width="2"/></svg>
<div class="a" style="left:0;top:652px;width:280px;height:1px;background:#1e2c2f"></div>
<div class="a nw" style="left:66px;top:665px;font-size:13px;color:#eef0f0;letter-spacing:-0.6px">Open Proposals</div>
<svg class="a" style="left:46px;top:666px" width="9" height="14" viewBox="0 0 9 14"><path d="M1 1.5H8M1 7.5H8M1 13H8" stroke="#4a9bb5" stroke-width="2"/></svg>
<div class="a" style="left:0;top:692px;width:280px;height:1px;background:#1e2c2f"></div>
<div class="a nw" style="left:66px;top:705px;font-size:13px;color:#eef0f0;letter-spacing:-0.6px">All Templates</div>
<svg class="a" style="left:46px;top:706px" width="9" height="14" viewBox="0 0 9 14"><path d="M1 1.5H8M1 7.5H8M1 13H8" stroke="#4a9bb5" stroke-width="2"/></svg>

<!-- SN header -->
<div class="a" style="left:47px;top:108px;width:40px;height:36px;overflow:hidden"><div class="a nw" style="left:-27px;top:7px;font-size:19px;font-weight:700;color:#fff;letter-spacing:-0.2px">Capita</div></div>
<div class="a nw" style="left:98px;top:119px;font-size:13px;color:#313452;letter-spacing:-0.45px">Service Management</div>
<div class="a" style="left:1063px;top:114px;width:24px;height:24px;border-radius:50%;background:#e9e9e9;color:#4d4d4d;font-size:10px;text-align:center;line-height:26px">JR</div>
<div class="a" style="left:1080px;top:131px;width:8px;height:8px;border-radius:50%;background:#57c58a;border:1px solid #02043a"></div>
<div class="a nw" style="left:1095px;top:119px;font-size:13px;color:#e8e8ef;letter-spacing:-0.44px">John Robinson</div>
<svg class="a" style="left:1183px;top:124px" width="10" height="6" viewBox="0 0 10 6"><path d="M0.5 0.5H9.5L5 5.5Z" fill="#e8e8ef"/></svg>
<svg class="a" style="left:1220px;top:115px" width="23" height="23" viewBox="0 0 24 24"><circle cx="10.5" cy="10.5" r="6.5" fill="none" stroke="#fff" stroke-width="1.8"/><path d="M15.5 15.5L21.5 21.5" stroke="#fff" stroke-width="2"/></svg>
<svg class="a" style="left:1254px;top:116px" width="24" height="20" viewBox="0 0 24 20"><path d="M1 7H14V15H6L3.5 18V15H1Z" fill="none" stroke="#fff" stroke-width="1.7" stroke-linejoin="round"/><path d="M6 6.5V2H21V10H19V12.5L17 10H14.5" fill="none" stroke="#fff" stroke-width="1.7" stroke-linejoin="round"/></svg>
<svg class="a" style="left:1290px;top:117px" width="21" height="21" viewBox="0 0 23 23"><circle cx="11.5" cy="11.5" r="10" fill="none" stroke="#fff" stroke-width="1.8"/><path d="M8.2 8.8Q8.2 5.8 11.5 5.8Q14.8 5.8 14.8 8.6Q14.8 10.3 12.8 11.3Q11.5 12 11.5 13.8" fill="none" stroke="#fff" stroke-width="2"/><circle cx="11.5" cy="16.8" r="1.3" fill="#fff"/></svg>
<svg class="a" style="left:1325px;top:117px" width="20" height="20" viewBox="0 0 24 24"><path d="M10.3 1.5H13.7L14.3 4.4L16.4 5.3L18.9 3.7L21.3 6.1L19.7 8.6L20.6 10.7L23.5 11.3V14.7L20.6 15.3L19.7 17.4L21.3 19.9L18.9 22.3L16.4 20.7L14.3 21.6L13.7 24.5H10.3L9.7 21.6L7.6 20.7L5.1 22.3L2.7 19.9L4.3 17.4L3.4 15.3L0.5 14.7V11.3L3.4 10.7L4.3 8.6L2.7 6.1L5.1 3.7L7.6 5.3L9.7 4.4Z" transform="translate(0,-1) scale(1)" fill="none" stroke="#fff" stroke-width="1.7" stroke-linejoin="round"/><circle cx="12" cy="12" r="3.6" fill="none" stroke="#fff" stroke-width="1.7"/></svg>


<!-- shelf -->
<div class="a" style="left:0;top:0;width:48px;height:768px;background:rgba(64,53,56,0.8);backdrop-filter:blur(4px);border-radius:0 27px 24px 0"></div>
<div class="a" style="left:0;top:101px;width:48px;height:50px;background:linear-gradient(180deg,rgba(255,255,255,0) 0px,rgba(255,255,255,0.07) 4px,rgba(255,255,255,0.07) 46px,rgba(255,255,255,0) 50px)"></div>
<div class="a" style="left:0;top:8px;width:40px;height:40px;border-radius:50%;background:rgba(255,255,255,0.1)"></div>
<div class="a" style="left:13px;top:21px;width:14px;height:14px;border-radius:50%;border:2px solid #fff"></div>
<svg class="a" style="left:1px;top:128px" width="40" height="40" viewBox="0 0 40 40"><circle cx="20" cy="20" r="19.5" fill="#db4437"/><path d="M20 20L3 30.5A19.5 19.5 0 0 0 22 39.4Z" fill="#0f9d58"/><path d="M20 20L22 39.4A19.5 19.5 0 0 0 38.5 12Z" fill="#fcc934"/><path d="M20 20L3 30.5A19.5 19.5 0 0 1 4 8.5Z" fill="#0f9d58"/><path d="M4 8.5L13 23.5L20 20Z" fill="#0f9d58"/><path d="M20 11H38.5L38.5 12L27 24Z" fill="#fcc934"/><circle cx="20" cy="20" r="9" fill="#fff"/><circle cx="20" cy="20" r="7.2" fill="#4285f4"/></svg>
<svg class="a" style="left:1px;top:197px" width="41" height="30" viewBox="0 0 41 30"><rect x="0.5" y="0.5" width="40" height="29" rx="2.5" fill="#e8e8e8"/><path d="M6 29V9L20.5 19.5L35 9V29" fill="#f2f2f2"/><path d="M2.5 28V5L20.5 18.5L38.5 5V28" fill="none" stroke="#d23f31" stroke-width="5" stroke-linejoin="miter"/></svg>
<svg class="a" style="left:6px;top:256px" width="30" height="40" viewBox="0 0 30 40"><path d="M2.5 0H20L30 10V37.5Q30 40 27.5 40H2.5Q0 40 0 37.5V2.5Q0 0 2.5 0Z" fill="#4285f4"/><path d="M20 0L30 10H22.5Q20 10 20 7.5Z" fill="#a1c2fa"/><path d="M8 20H22M8 24H22M8 28H22M8 32H17" stroke="#fff" stroke-width="1.8"/></svg>
<svg class="a" style="left:5px;top:328px" width="33" height="24" viewBox="0 0 33 24"><rect x="0" y="0" width="33" height="24" rx="6" fill="#e62117"/><path d="M13 7L21.5 12L13 17Z" fill="#fff"/></svg>
<svg class="a" style="left:1px;top:384px" width="40" height="40" viewBox="0 0 40 40"><circle cx="20" cy="20" r="20" fill="#fff"/><path d="M12 6.5L27 20L12 33.5Z" fill="#00c3f0"/><path d="M12 6.5L27 20L31 16.5Z" fill="#00d678"/><path d="M12 33.5L27 20L31 23.5Z" fill="#ff3a44"/><path d="M27 20L31 16.5L36 19.5Q36.5 20 36 20.5L31 23.5Z" fill="#ffd000"/></svg>
<div class="a" style="left:10px;top:435px;width:20px;height:1px;background:#7a7475"></div>
<svg class="a" style="left:1px;top:448px" width="40" height="40" viewBox="0 0 40 40"><circle cx="20" cy="20" r="20" fill="#4a84e9"/><path d="M9 12Q9 11 10 11H17L20 14H31Q32 14 32 15V28Q32 29 31 29H10Q9 29 9 28Z" fill="#fff"/></svg>
<div class="a" style="left:0;top:565px;width:40px;height:40px;border-radius:50%;background:rgba(255,255,255,0.13)"></div>
<svg class="a" style="left:10px;top:575px" width="20" height="20" viewBox="0 0 20 20"><path d="M4 17L3 16L10 8.5L12 10.5Z" fill="#fff"/><path d="M11 6L14.5 2.5Q15.5 1.5 16.5 2.5L18 4Q19 5 18 6L14.5 9.5Z" fill="#fff"/><path d="M10 7L13.5 10.5" stroke="#fff" stroke-width="1.5"/></svg>
<div class="a" style="left:0;top:613px;width:40px;height:146px;border-radius:20px;background:rgba(255,255,255,0.09)"></div>
<div class="a" style="left:12px;top:628px;width:16px;height:16px;border-radius:50%;background:#eee;color:#333;font-size:11px;font-weight:700;text-align:center;line-height:16px">3</div>
<svg class="a" style="left:12px;top:655px" width="16" height="13" viewBox="0 0 16 13"><path d="M0.5 3.5Q8 -2.5 15.5 3.5L8 12.5Z" fill="#fff"/></svg>
<svg class="a" style="left:16px;top:680px" width="8" height="15" viewBox="0 0 8 15"><path d="M2.5 0.5H5.5V2H7.5V14.5H0.5V2H2.5Z" fill="#fff"/><path d="M4.5 4L2 8.5H4L3.5 12L6 7.5H4Z" fill="#4b4547"/></svg>
<div class="a nw" style="left:0;top:714px;width:40px;text-align:center;font-size:14px;color:#fff;line-height:18px">14<br>25</div>
</body></html>
